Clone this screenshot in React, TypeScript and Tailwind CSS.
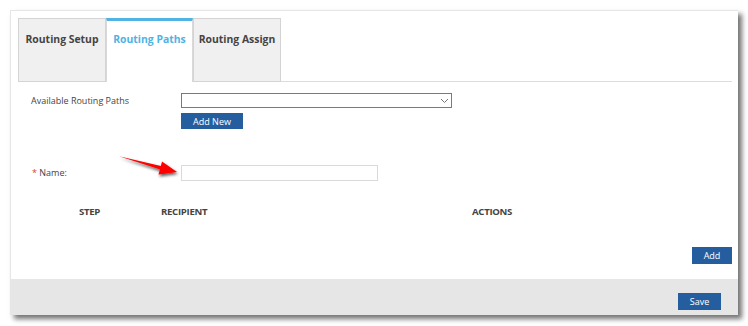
const font = { fontFamily: '"Open Sans", "Liberation Sans", sans-serif' };

const Tab = ({ label, active }: { label: string; active?: boolean }) =>
  active ? (
    <div className="h-[64px] w-[87px] border-x border-[#d9d9d9] border-t-[3px] border-t-[#4fb3e3] bg-white pt-[11px] text-center text-[10.4px] font-bold text-[#4fb3e3]">
      {label}
    </div>
  ) : (
    <div className="h-[64px] w-[88px] border border-[#d4d4d4] bg-[#f0f0f0] pt-[13px] text-center text-[10.4px] font-bold text-[#444]">
      {label}
    </div>
  );

const Btn = ({ children, className = "" }: { children: React.ReactNode; className?: string }) => (
  <button className={`flex items-center justify-center bg-[#255e9f] text-[9px] leading-none text-white ${className}`}>
    {children}
  </button>
);

export default function App() {
  return (
    <div className="relative h-[326px] w-[748px] overflow-hidden bg-white pl-[10px] pt-[10px]" style={font}>
      <div className="w-[728px] border-l border-t border-[#e6e6e6] shadow-[4px_4px_5px_rgba(0,0,0,0.55)]">
        <div className="flex h-[268px] flex-col bg-white pl-[7px] pr-[6px] pt-[7px]">
          {/* tabs */}
          <div className="flex items-end">
            <Tab label="Routing Setup" />
            <Tab label="Routing Paths" active />
            <Tab label="Routing Assign" />
            <div className="flex-1 border-b border-[#dcdcdc]" />
          </div>

          <div className="pl-[13px] text-[9px] text-[#444]">
            <div className="mt-[11px] flex items-center">
              <span className="w-[150px]">Available Routing Paths</span>
              <div className="flex h-[15px] w-[271px] items-center justify-end border border-[#7a7a7a] pr-[2px]">
                <svg width="9" height="6" viewBox="0 0 9 6" fill="none" stroke="#777" strokeWidth="1">
                  <path d="M1 1l3.5 3.5L8 1" />
                </svg>
              </div>
            </div>
            <div className="mt-[5px] pl-[150px]">
              <Btn className="h-[16px] w-[62px]">Add New</Btn>
            </div>

            <div className="mt-[36px] flex items-center">
              <span className="w-[150px] pl-[1px]">
                <span className="text-[#e23b3b]">*</span> Name:
              </span>
              <div className="h-[16px] w-[197px] border border-[#dadada]" />
            </div>

            <div className="mt-[24px] grid grid-cols-[82px_311px_auto] pl-[48px] text-[9.6px] font-bold tracking-[-0.3px] text-[#444]">
              <span>STEP</span>
              <span>RECIPIENT</span>
              <span>ACTIONS</span>
            </div>
          </div>

          <div className="mt-[28px] flex justify-end">
            <Btn className="h-[17px] w-[40px]">Add</Btn>
          </div>
        </div>

        <div className="flex h-[36px] justify-end bg-[#e6e6e6] pr-[17px] pt-[14px]">
          <Btn className="h-[17px] w-[43px]">Save</Btn>
        </div>
      </div>

      {/* red pointer arrow */}
      <svg className="absolute left-[110px] top-[148px]" width="75" height="35" viewBox="0 0 75 35">
        <defs>
          <filter id="sh" x="-50%" y="-50%" width="200%" height="200%">
            <feDropShadow dx="1" dy="2" stdDeviation="1.5" floodColor="#000" floodOpacity="0.65" />
          </filter>
        </defs>
        <g filter="url(#sh)">
          <path d="M9 8.2 L52 18.3 L51 21.7 Z" fill="#f00" />
          <path d="M67 24 L48.5 26.5 L52 13.5 Z" fill="#f00" />
        </g>
      </svg>
    </div>
  );
}
